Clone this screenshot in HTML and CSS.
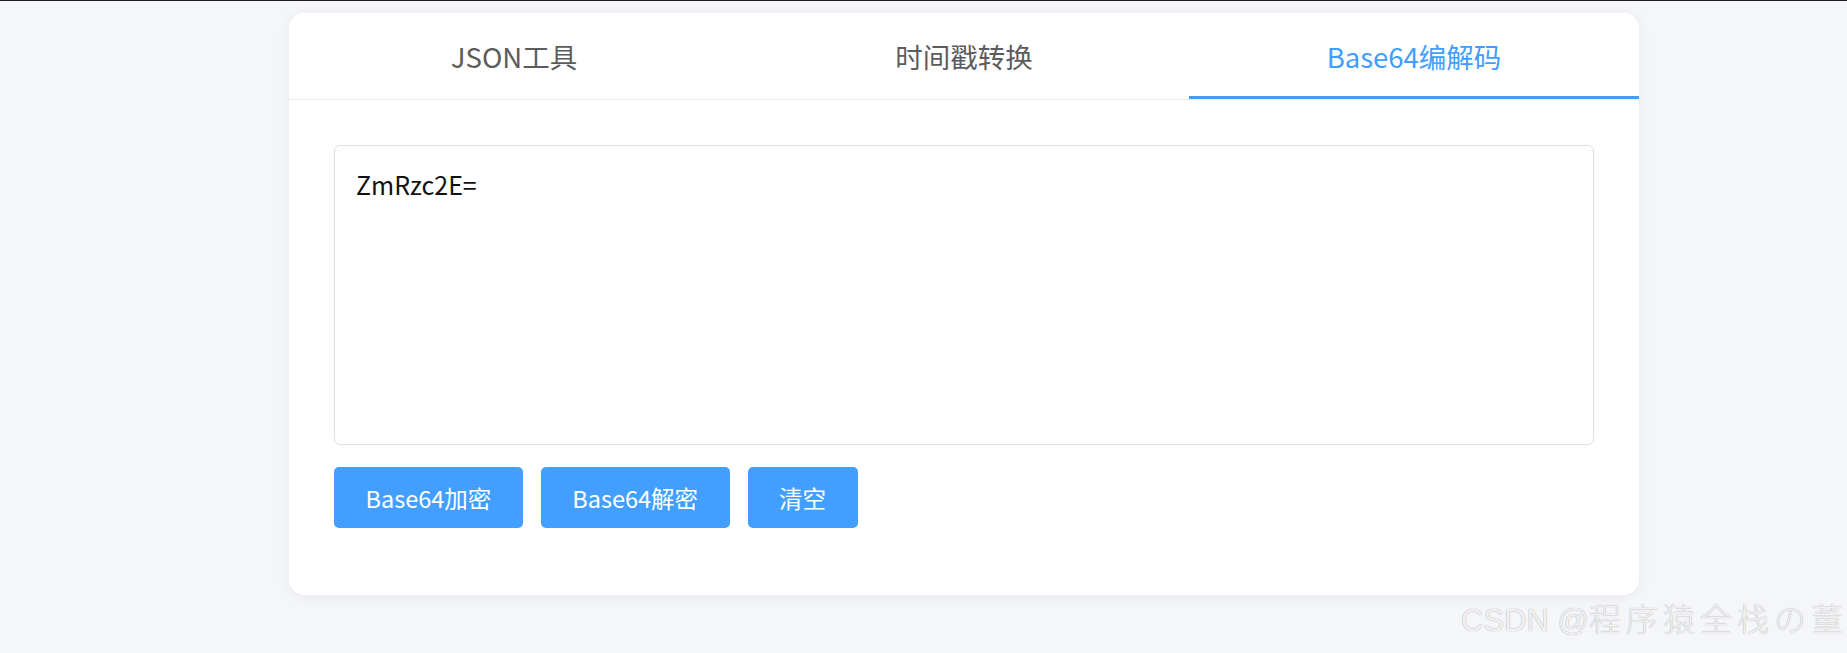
FILE: index.html
```html
<!DOCTYPE html>
<html lang="zh-CN">
<head>
<meta charset="utf-8">
<title>工具箱</title>
<link rel="stylesheet" href="styles.css">
</head>
<body>
<div class="topline"></div>
<main class="page">
  <section class="card">
    <nav class="tabs">
      <div class="tab">JSON工具</div>
      <div class="tab">时间戳转换</div>
      <div class="tab active">Base64编解码</div>
    </nav>
    <div class="panel">
      <textarea class="input" spellcheck="false">ZmRzc2E=</textarea>
      <div class="actions">
        <button class="btn">Base64加密</button>
        <button class="btn">Base64解密</button>
        <button class="btn">清空</button>
      </div>
    </div>
  </section>
</main>
<div class="watermark">CSDN @<span class="cjk">程序猿全栈の董</span></div>
</body>
</html>
```
FILE: styles.css
```css
html, body {
  margin: 0;
  padding: 0;
  background: #f5f6fa;
  font-family: "Noto Sans CJK SC", "Noto Sans", sans-serif;
}
body {
  height: 653px;
  overflow: hidden;
  position: relative;
}
.topline {
  height: 1px;
  background: #1b1b1b;
}
.page {
  padding-top: 12px;
  padding-left: 289px;
}
.card {
  width: 1350px;
  background: #fff;
  border-radius: 15px;
  box-shadow: 0 2px 14px rgba(0, 0, 0, 0.06);
  overflow: hidden;
}
.tabs {
  display: flex;
  border-bottom: 1px solid #e9eaec;
}
.tab {
  flex: 1;
  height: 86px;
  box-sizing: border-box;
  display: flex;
  align-items: center;
  justify-content: center;
  font-size: 27.5px;
  color: #5c5c5c;
  border-bottom: 3px solid transparent;
  padding-top: 3px;
}
.tab.active {
  color: #409eff;
  border-bottom-color: #409eff;
}
.panel {
  padding: 45px 45px 67px 45px;
}
.input {
  display: block;
  width: 100%;
  height: 300px;
  box-sizing: border-box;
  border: 1px solid #dcdfe6;
  border-radius: 6px;
  padding: 20px 21px;
  font-family: "Noto Sans CJK SC", "Noto Sans", sans-serif;
  font-size: 25px;
  line-height: 1.5;
  color: #111;
  resize: none;
  outline: none;
  background: #fff;
}
.actions {
  display: flex;
  gap: 18px;
  margin-top: 22px;
}
.btn {
  height: 61px;
  padding: 0 31.5px;
  border: none;
  border-radius: 5px;
  background: #429fff;
  color: #fff;
  font-family: "Noto Sans CJK SC", "Noto Sans", sans-serif;
  font-size: 23.5px;
  cursor: pointer;
}
.watermark {
  position: absolute;
  left: 1461px;
  top: 594px;
  font-family: "Liberation Sans", "Noto Sans CJK JP", sans-serif;
  font-size: 31px;
  color: #f1f1f1;
  text-shadow: 0 0 1px rgba(0, 0, 0, 0.4);
  white-space: nowrap;
}
.watermark .cjk {
  font-family: "Noto Sans CJK JP", sans-serif;
  font-weight: 300;
  font-size: 32px;
  letter-spacing: 5px;
}
```
